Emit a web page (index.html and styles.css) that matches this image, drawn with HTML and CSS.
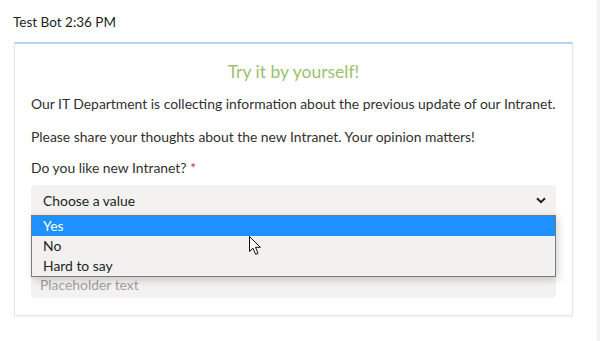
FILE: index.html
```html
<!DOCTYPE html>
<html lang="en">
<head>
    <meta charset="UTF-8">
    <meta name="viewport" content="width=device-width, initial-scale=1.0">
    <title>Survey Card</title>
    <link rel="stylesheet" href="styles.css">
</head>
<body>
    <div class="chat">
        <div class="meta">Test Bot 2:36 PM</div>
        <div class="card">
            <h2 class="title">Try it by yourself!</h2>
            <p class="text">Our IT Department is collecting information about the previous update of our Intranet.</p>
            <p class="text">Please share your thoughts about the new Intranet. Your opinion matters!</p>
            <div class="field">
                <div class="label">Do you like new Intranet? <span class="req">*</span></div>
                <div class="select">
                    <span>Choose a value</span>
                    <svg class="chevron" width="10" height="7" viewBox="0 0 10 7"><path d="M1 1.2 L5 5.2 L9 1.2" fill="none" stroke="#201f1e" stroke-width="2"/></svg>
                </div>
                <ul class="options">
                    <li class="option selected">Yes</li>
                    <li class="option">No</li>
                    <li class="option">Hard to say</li>
                </ul>
                <svg class="cursor" width="14" height="20" viewBox="0 0 14 20"><path d="M0.5 0.5 L0.5 15.5 L4 12.2 L6.6 18.3 L9 17.3 L6.5 11.3 L11.3 11.3 Z" fill="#fff" stroke="#111" stroke-width="1"/></svg>
            </div>
            <div class="input">Placeholder text</div>
        </div>
    </div>
    <div class="scrollbar"></div>
</body>
</html>
```

FILE: styles.css
```css
body {
    margin: 0;
    font-family: Lato, "Open Sans", sans-serif;
    font-size: 13.9px;
    color: #323130;
    background: #fff;
    display: flex;
    height: 341px;
    overflow: hidden;
}
.chat {
    flex: 1;
    padding: 13px 0 0 13px;
}
.meta {
    line-height: 18px;
    font-size: 13.5px;
    color: #201f1e;
    margin-bottom: 11px;
}
.card {
    width: 559px;
    margin-left: 1px;
    box-sizing: border-box;
    border: 1px solid #e6e6e6;
    border-top: 2px solid #b5d3f1;
    padding: 0 16px 17px;
    box-shadow: 0 1px 2px rgba(0, 0, 0, 0.06);
}
.title {
    margin: 17px 0 0;
    font-size: 17.5px;
    font-weight: normal;
    line-height: 22px;
    text-align: center;
    color: #9bc171;
}
.text {
    margin: 12px 0 0;
    line-height: 18px;
}
.text + .text {
    margin-top: 15px;
}
.field {
    position: relative;
    margin-top: 13px;
}
.label {
    line-height: 18px;
}
.req {
    color: #c4314b;
}
.select {
    margin-top: 8px;
    height: 30px;
    background: #f3f2f1;
    border-radius: 4px 4px 0 0;
    display: flex;
    align-items: center;
    justify-content: space-between;
    padding: 0 10px 0 12px;
    color: #201f1e;
}
.options {
    position: absolute;
    left: 0;
    right: 0;
    top: 56px;
    margin: 0;
    padding: 0;
    list-style: none;
    border: 1px solid #7a7a7a;
    background: #f2f1f0;
    box-shadow: 2px 3px 8px rgba(0, 0, 0, 0.18);
    z-index: 2;
}
.option {
    height: 20px;
    line-height: 20px;
    padding-left: 11px;
    color: #201f1e;
}
.option.selected {
    background: #1e90ff;
    color: #fff;
}
.cursor {
    position: absolute;
    left: 218px;
    top: 77px;
    z-index: 3;
}
.input {
    margin-top: 53px;
    height: 30px;
    line-height: 33px;
    background: #f3f2f1;
    border-radius: 4px;
    padding-left: 9px;
    color: #a19f9d;
    box-sizing: border-box;
}
.scrollbar {
    width: 3px;
    background: #f3f3f3;
}
```
